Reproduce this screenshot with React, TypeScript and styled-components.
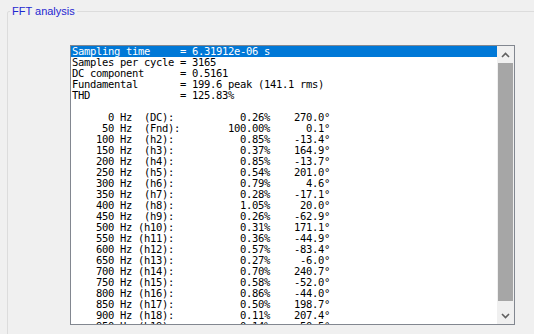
import React from "react";
import styled, { createGlobalStyle } from "styled-components";

const GlobalStyle = createGlobalStyle`
  html, body {
    margin: 0;
    padding: 0;
    background: #f0f0f0;
    overflow: hidden;
  }
`;

const Screen = styled.div`
  width: 534px;
  height: 334px;
  overflow: hidden;
  background: #f0f0f0;
`;

const GroupBox = styled.fieldset`
  margin: 4px 0 0 7px;
  padding: 0;
  width: 600px;
  height: 420px;
  border: 1px solid #dcdcdc;
  border-radius: 2px;
  box-sizing: border-box;
`;

const Caption = styled.legend`
  margin-left: 2px;
  padding: 0 2px 0 2px;
  font-family: "Liberation Sans", Arial, sans-serif;
  font-size: 11px;
  line-height: 14px;
  color: #1f28d0;
`;

const ListBox = styled.div`
  margin: 27px 0 0 62px;
  width: 445px;
  height: 280px;
  border: 1px solid #828790;
  box-sizing: border-box;
  background: #ffffff;
  display: flex;
  overflow: hidden;
`;

const Lines = styled.div`
  flex: 1;
  overflow: hidden;
  font-family: "DejaVu Sans Mono", "Liberation Mono", monospace;
  font-size: 10.5px;
  letter-spacing: -0.32px;
  line-height: 11px;
  color: #000000;
`;

const Line = styled.div<{ $selected?: boolean }>`
  height: 11px;
  padding-left: 1px;
  white-space: pre;
  background: ${(p) => (p.$selected ? "#0078d7" : "transparent")};
  color: ${(p) => (p.$selected ? "#ffffff" : "#000000")};
`;

const ScrollBar = styled.div`
  width: 17px;
  display: flex;
  flex-direction: column;
  background: #f0f0f0;
`;

const ArrowButton = styled.div`
  height: 17px;
  display: flex;
  align-items: center;
  justify-content: center;
`;

const Track = styled.div`
  flex: 1;
  display: flex;
  flex-direction: column;
  padding-bottom: 6px;
`;

const Thumb = styled.div`
  flex: 1;
  margin: 0 1px 0 1px;
  background: #a6a6a6;
`;

const Chevron: React.FC<{ up?: boolean }> = ({ up }) => (
  <svg width="9" height="6" viewBox="0 0 9 6">
    <path
      d={up ? "M1 5 L4.5 1.5 L8 5" : "M1 1 L4.5 4.5 L8 1"}
      fill="none"
      stroke="#606060"
      strokeWidth="1.6"
    />
  </svg>
);

const header = [
  "Sampling time     = 6.31912e-06 s",
  "Samples per cycle = 3165",
  "DC component      = 0.5161",
  "Fundamental       = 199.6 peak (141.1 rms)",
  "THD               = 125.83%",
  "",
];

const harmonics: [number, string, string, string][] = [
  [0, "(DC):", "0.26%", "270.0°"],
  [50, "(Fnd):", "100.00%", "0.1°"],
  [100, "(h2):", "0.85%", "-13.4°"],
  [150, "(h3):", "0.37%", "164.9°"],
  [200, "(h4):", "0.85%", "-13.7°"],
  [250, "(h5):", "0.54%", "201.0°"],
  [300, "(h6):", "0.79%", "4.6°"],
  [350, "(h7):", "0.28%", "-17.1°"],
  [400, "(h8):", "1.05%", "20.0°"],
  [450, "(h9):", "0.26%", "-62.9°"],
  [500, "(h10):", "0.31%", "171.1°"],
  [550, "(h11):", "0.36%", "-44.9°"],
  [600, "(h12):", "0.57%", "-83.4°"],
  [650, "(h13):", "0.27%", "-6.0°"],
  [700, "(h14):", "0.70%", "240.7°"],
  [750, "(h15):", "0.58%", "-52.0°"],
  [800, "(h16):", "0.86%", "-44.0°"],
  [850, "(h17):", "0.50%", "198.7°"],
  [900, "(h18):", "0.11%", "207.4°"],
  [950, "(h19):", "0.14%", "-50.5°"],
];

const formatRow = ([hz, label, pct, deg]: [number, string, string, string]) => {
  const freq = String(hz).padStart(7) + " Hz";
  const tag = label === "(Fnd):" ? "  " + label : label.padStart(7);
  const left = (freq + tag).padEnd(26);
  return left + pct.padStart(7) + deg.padStart(10);
};

export default function App() {
  const rows = [...header, ...harmonics.map(formatRow)];
  return (
    <Screen>
      <GlobalStyle />
      <GroupBox>
        <Caption>FFT analysis</Caption>
        <ListBox>
          <Lines>
            {rows.map((text, i) => (
              <Line key={i} $selected={i === 0}>
                {text}
              </Line>
            ))}
          </Lines>
          <ScrollBar>
            <ArrowButton>
              <Chevron up />
            </ArrowButton>
            <Track>
              <Thumb />
            </Track>
            <ArrowButton>
              <Chevron />
            </ArrowButton>
          </ScrollBar>
        </ListBox>
      </GroupBox>
    </Screen>
  );
}
